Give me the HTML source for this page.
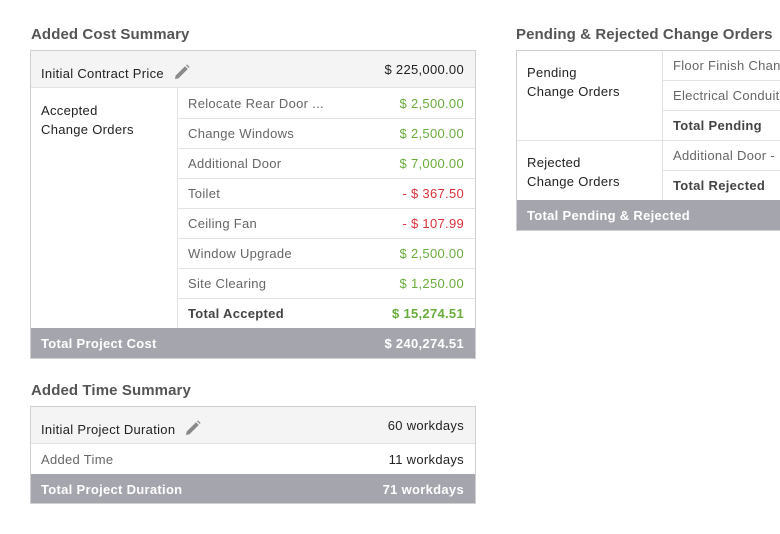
<!DOCTYPE html>
<html><head><meta charset="utf-8"><style>
*{margin:0;padding:0;box-sizing:border-box}
body{width:780px;height:534px;background:#fff;font-family:"Liberation Sans",Arial,sans-serif;font-size:13px;color:#222;position:relative;overflow:hidden;letter-spacing:0.3px}
.a{position:absolute;white-space:nowrap}
h2{position:absolute;font-size:15px;font-weight:bold;color:#555;white-space:nowrap;letter-spacing:0.1px}
.box{position:absolute;border:1px solid #cfcfcf;background:#fff}
.hl{position:absolute;height:1px;background:#e2e2e2}
.vl{position:absolute;width:1px;background:#e2e2e2}
.g{color:#6aac3c}.r{color:#d9323a}.m{color:#666}
.foot{position:absolute;background:#a5a5ae;color:#fff;font-weight:bold}
.b{font-weight:bold;color:#444}
</style></head><body>
<h2 style="left:31px;top:26px">Added Cost Summary</h2>
<div class="box" style="left:30px;top:50px;width:446px;height:309px"></div>
<div class="a" style="left:31px;top:51px;width:444px;height:37px;background:#f3f4f3;border-bottom:1px solid #e2e2e2"></div>
<div class="a" style="left:41px;top:66px">Initial Contract Price</div>
<svg class="a" style="left:174px;top:64px" width="16" height="16" viewBox="0 0 16 16"><path d="M1 15 L1.6 11.6 L11 2.2 L13.8 5 L4.4 14.4 Z M12 1.2 L13 0.4 L15.6 3 L14.8 4 Z" fill="#8a8a8a"/></svg>
<div class="a" style="right:316px;top:62px">$ 225,000.00</div>
<div class="vl" style="left:177px;top:88px;height:240px"></div>
<div class="a" style="left:41px;top:101px;line-height:19px">Accepted<br>Change Orders</div>
<div class="hl" style="left:178px;top:118px;width:297px"></div>
<div class="hl" style="left:178px;top:148px;width:297px"></div>
<div class="hl" style="left:178px;top:178px;width:297px"></div>
<div class="hl" style="left:178px;top:208px;width:297px"></div>
<div class="hl" style="left:178px;top:238px;width:297px"></div>
<div class="hl" style="left:178px;top:268px;width:297px"></div>
<div class="hl" style="left:178px;top:298px;width:297px"></div>
<div class="a m" style="left:188px;top:96px">Relocate Rear Door ...</div><div class="a g" style="right:316px;top:96px">$ 2,500.00</div>
<div class="a m" style="left:188px;top:126px">Change Windows</div><div class="a g" style="right:316px;top:126px">$ 2,500.00</div>
<div class="a m" style="left:188px;top:156px">Additional Door</div><div class="a g" style="right:316px;top:156px">$ 7,000.00</div>
<div class="a m" style="left:188px;top:186px">Toilet</div><div class="a r" style="right:316px;top:186px">- $ 367.50</div>
<div class="a m" style="left:188px;top:216px">Ceiling Fan</div><div class="a r" style="right:316px;top:216px">- $ 107.99</div>
<div class="a m" style="left:188px;top:246px">Window Upgrade</div><div class="a g" style="right:316px;top:246px">$ 2,500.00</div>
<div class="a m" style="left:188px;top:276px">Site Clearing</div><div class="a g" style="right:316px;top:276px">$ 1,250.00</div>
<div class="a b" style="left:188px;top:306px">Total Accepted</div><div class="a g" style="right:316px;top:306px;font-weight:bold">$ 15,274.51</div>
<div class="foot" style="left:31px;top:328px;width:444px;height:30px"></div>
<div class="a" style="left:41px;top:336px;color:#fff;font-weight:bold">Total Project Cost</div>
<div class="a" style="right:316px;top:336px;color:#fff;font-weight:bold">$ 240,274.51</div>

<h2 style="left:31px;top:382px">Added Time Summary</h2>
<div class="box" style="left:30px;top:406px;width:446px;height:98px"></div>
<div class="a" style="left:31px;top:407px;width:444px;height:37px;background:#f3f4f3;border-bottom:1px solid #e2e2e2"></div>
<div class="a" style="left:41px;top:422px">Initial Project Duration</div>
<svg class="a" style="left:185px;top:420px" width="16" height="16" viewBox="0 0 16 16"><path d="M1 15 L1.6 11.6 L11 2.2 L13.8 5 L4.4 14.4 Z M12 1.2 L13 0.4 L15.6 3 L14.8 4 Z" fill="#8a8a8a"/></svg>
<div class="a" style="right:316px;top:418px">60 workdays</div>
<div class="a m" style="left:41px;top:452px">Added Time</div>
<div class="a" style="right:316px;top:452px">11 workdays</div>
<div class="foot" style="left:31px;top:474px;width:444px;height:29px"></div>
<div class="a" style="left:41px;top:482px;color:#fff;font-weight:bold">Total Project Duration</div>
<div class="a" style="right:316px;top:482px;color:#fff;font-weight:bold">71 workdays</div>

<h2 style="left:516px;top:26px">Pending &amp; Rejected Change Orders</h2>
<div class="box" style="left:516px;top:50px;width:300px;height:181px"></div>
<div class="vl" style="left:662px;top:51px;height:149px"></div>
<div class="hl" style="left:517px;top:140px;width:270px"></div>
<div class="hl" style="left:663px;top:80px;width:120px"></div>
<div class="hl" style="left:663px;top:110px;width:120px"></div>
<div class="hl" style="left:663px;top:170px;width:120px"></div>
<div class="a" style="left:527px;top:63px;line-height:19px">Pending<br>Change Orders</div>
<div class="a" style="left:527px;top:153px;line-height:19px">Rejected<br>Change Orders</div>
<div class="a m" style="left:673px;top:58px">Floor Finish Change</div>
<div class="a m" style="left:673px;top:88px">Electrical Conduit</div>
<div class="a b" style="left:673px;top:118px">Total Pending</div>
<div class="a m" style="left:673px;top:148px">Additional Door -</div>
<div class="a b" style="left:673px;top:178px">Total Rejected</div>
<div class="foot" style="left:517px;top:200px;width:270px;height:30px"></div>
<div class="a" style="left:527px;top:208px;color:#fff;font-weight:bold">Total Pending &amp; Rejected</div>
</body></html>
